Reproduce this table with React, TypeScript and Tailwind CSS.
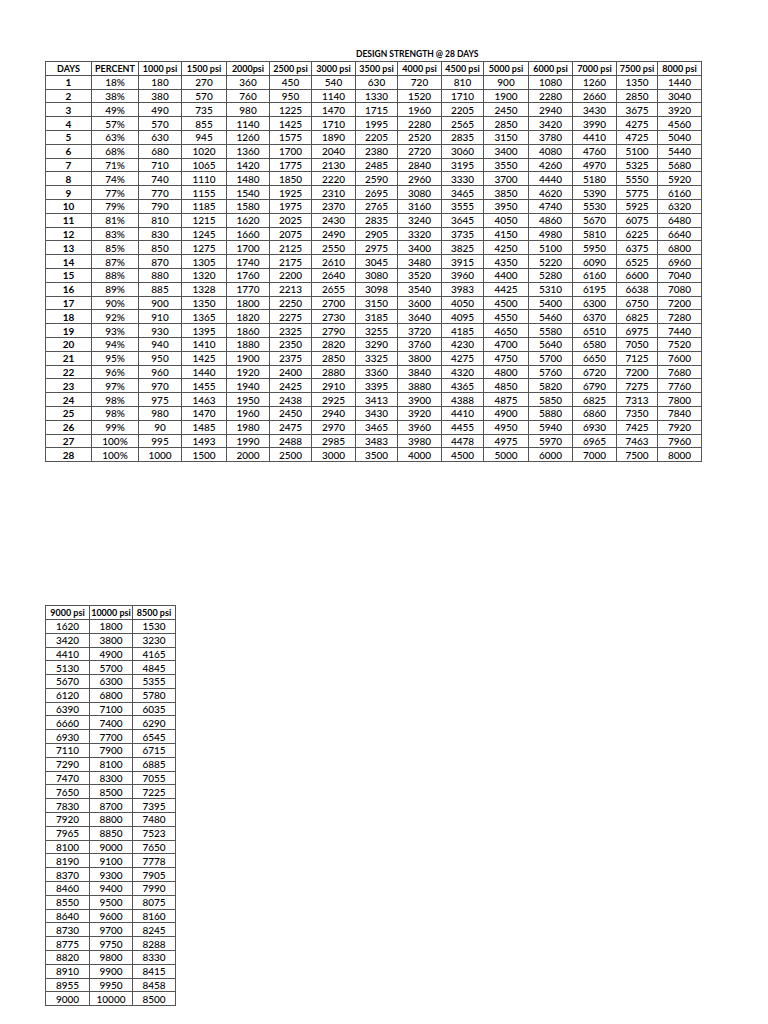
const mainHead = ['DAYS', 'PERCENT', '1000 psi', '1500 psi', '2000psi', '2500 psi', '3000 psi', '3500 psi', '4000 psi', '4500 psi', '5000 psi', '6000 psi', '7000 psi', '7500 psi', '8000 psi'];
const mainWidths = ['w-[46px]', 'w-[47px]', 'w-[43px]', 'w-[45px]', 'w-[43px]', 'w-[42px]', 'w-[44px]', 'w-[42px]', 'w-[44px]', 'w-[42px]', 'w-[45px]', 'w-[44px]', 'w-[44px]', 'w-[41px]', 'w-[44px]'];

const mainRows = [
  ['1', '18%', '180', '270', '360', '450', '540', '630', '720', '810', '900', '1080', '1260', '1350', '1440'],
  ['2', '38%', '380', '570', '760', '950', '1140', '1330', '1520', '1710', '1900', '2280', '2660', '2850', '3040'],
  ['3', '49%', '490', '735', '980', '1225', '1470', '1715', '1960', '2205', '2450', '2940', '3430', '3675', '3920'],
  ['4', '57%', '570', '855', '1140', '1425', '1710', '1995', '2280', '2565', '2850', '3420', '3990', '4275', '4560'],
  ['5', '63%', '630', '945', '1260', '1575', '1890', '2205', '2520', '2835', '3150', '3780', '4410', '4725', '5040'],
  ['6', '68%', '680', '1020', '1360', '1700', '2040', '2380', '2720', '3060', '3400', '4080', '4760', '5100', '5440'],
  ['7', '71%', '710', '1065', '1420', '1775', '2130', '2485', '2840', '3195', '3550', '4260', '4970', '5325', '5680'],
  ['8', '74%', '740', '1110', '1480', '1850', '2220', '2590', '2960', '3330', '3700', '4440', '5180', '5550', '5920'],
  ['9', '77%', '770', '1155', '1540', '1925', '2310', '2695', '3080', '3465', '3850', '4620', '5390', '5775', '6160'],
  ['10', '79%', '790', '1185', '1580', '1975', '2370', '2765', '3160', '3555', '3950', '4740', '5530', '5925', '6320'],
  ['11', '81%', '810', '1215', '1620', '2025', '2430', '2835', '3240', '3645', '4050', '4860', '5670', '6075', '6480'],
  ['12', '83%', '830', '1245', '1660', '2075', '2490', '2905', '3320', '3735', '4150', '4980', '5810', '6225', '6640'],
  ['13', '85%', '850', '1275', '1700', '2125', '2550', '2975', '3400', '3825', '4250', '5100', '5950', '6375', '6800'],
  ['14', '87%', '870', '1305', '1740', '2175', '2610', '3045', '3480', '3915', '4350', '5220', '6090', '6525', '6960'],
  ['15', '88%', '880', '1320', '1760', '2200', '2640', '3080', '3520', '3960', '4400', '5280', '6160', '6600', '7040'],
  ['16', '89%', '885', '1328', '1770', '2213', '2655', '3098', '3540', '3983', '4425', '5310', '6195', '6638', '7080'],
  ['17', '90%', '900', '1350', '1800', '2250', '2700', '3150', '3600', '4050', '4500', '5400', '6300', '6750', '7200'],
  ['18', '92%', '910', '1365', '1820', '2275', '2730', '3185', '3640', '4095', '4550', '5460', '6370', '6825', '7280'],
  ['19', '93%', '930', '1395', '1860', '2325', '2790', '3255', '3720', '4185', '4650', '5580', '6510', '6975', '7440'],
  ['20', '94%', '940', '1410', '1880', '2350', '2820', '3290', '3760', '4230', '4700', '5640', '6580', '7050', '7520'],
  ['21', '95%', '950', '1425', '1900', '2375', '2850', '3325', '3800', '4275', '4750', '5700', '6650', '7125', '7600'],
  ['22', '96%', '960', '1440', '1920', '2400', '2880', '3360', '3840', '4320', '4800', '5760', '6720', '7200', '7680'],
  ['23', '97%', '970', '1455', '1940', '2425', '2910', '3395', '3880', '4365', '4850', '5820', '6790', '7275', '7760'],
  ['24', '98%', '975', '1463', '1950', '2438', '2925', '3413', '3900', '4388', '4875', '5850', '6825', '7313', '7800'],
  ['25', '98%', '980', '1470', '1960', '2450', '2940', '3430', '3920', '4410', '4900', '5880', '6860', '7350', '7840'],
  ['26', '99%', '90', '1485', '1980', '2475', '2970', '3465', '3960', '4455', '4950', '5940', '6930', '7425', '7920'],
  ['27', '100%', '995', '1493', '1990', '2488', '2985', '3483', '3980', '4478', '4975', '5970', '6965', '7463', '7960'],
  ['28', '100%', '1000', '1500', '2000', '2500', '3000', '3500', '4000', '4500', '5000', '6000', '7000', '7500', '8000'],
];

const extraHead = ['9000 psi', '10000 psi', '8500 psi'];
const extraWidths = ['w-[44px]', 'w-[43px]', 'w-[43px]'];
const extraRows = [
  ['1620', '1800', '1530'], ['3420', '3800', '3230'], ['4410', '4900', '4165'], ['5130', '5700', '4845'],
  ['5670', '6300', '5355'], ['6120', '6800', '5780'], ['6390', '7100', '6035'], ['6660', '7400', '6290'],
  ['6930', '7700', '6545'], ['7110', '7900', '6715'], ['7290', '8100', '6885'], ['7470', '8300', '7055'],
  ['7650', '8500', '7225'], ['7830', '8700', '7395'], ['7920', '8800', '7480'], ['7965', '8850', '7523'],
  ['8100', '9000', '7650'], ['8190', '9100', '7778'], ['8370', '9300', '7905'], ['8460', '9400', '7990'],
  ['8550', '9500', '8075'], ['8640', '9600', '8160'], ['8730', '9700', '8245'], ['8775', '9750', '8288'],
  ['8820', '9800', '8330'], ['8910', '9900', '8415'], ['8955', '9950', '8458'], ['9000', '10000', '8500'],
];

type SheetProps = { head: string[]; widths: string[]; rows: string[][]; boldFirst?: boolean };

const Sheet = ({ head, widths, rows, boldFirst }: SheetProps) => (
  <table className="table-fixed border-collapse border border-[#333] text-[10px] leading-none text-black">
    <colgroup>
      {widths.map((w, i) => (
        <col key={i} className={w} />
      ))}
    </colgroup>
    <thead>
      <tr className="h-[13.8px]">
        {head.map((h) => (
          <th key={h} className="border border-[#555] p-0 text-center text-[9px] font-bold whitespace-nowrap">
            {h}
          </th>
        ))}
      </tr>
    </thead>
    <tbody>
      {rows.map((row, r) => (
        <tr key={r} className="h-[13.8px]">
          {row.map((cell, c) => (
            <td
              key={c}
              className={`border border-[#555] p-0 text-center whitespace-nowrap ${boldFirst && c === 0 ? 'font-bold' : 'font-medium'}`}
            >
              {cell}
            </td>
          ))}
        </tr>
      ))}
    </tbody>
  </table>
);

export default function App() {
  return (
    <div className="min-h-[1024px] w-[768px] bg-white pl-[45px] pt-[49px] font-['Lato','Open_Sans',sans-serif]">
      <div className="ml-[311px] h-[12px] text-[8.5px] font-bold leading-[10px] text-black">DESIGN STRENGTH @ 28 DAYS</div>
      <Sheet head={mainHead} widths={mainWidths} rows={mainRows} boldFirst />
      <div className="mt-[143px]">
        <Sheet head={extraHead} widths={extraWidths} rows={extraRows} />
      </div>
    </div>
  );
}
